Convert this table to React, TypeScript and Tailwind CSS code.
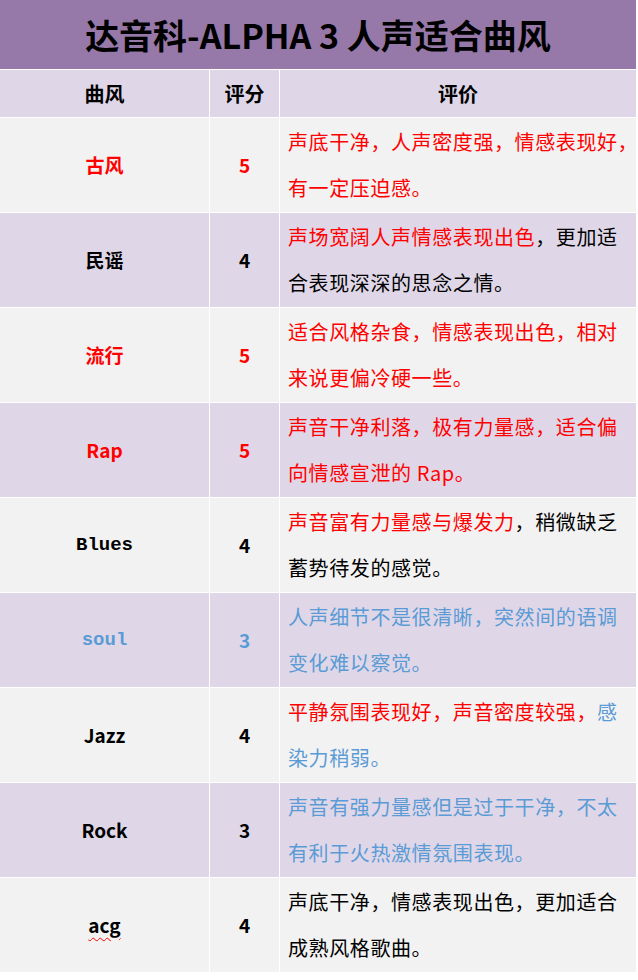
const RED = 'text-[#ff0000]'
const BLUE = 'text-[#5b9bd5]'
const BLACK = 'text-black'

type Seg = { t: string; c: string }
type Row = {
  name: string
  nameColor: string
  nameFont?: string
  score: string
  scoreColor: string
  lines: Seg[][]
  wavy?: boolean
}

const rows: Row[] = [
  {
    name: '古风', nameColor: RED, score: '5', scoreColor: RED,
    lines: [[{ t: '声底干净，人声密度强，情感表现好，', c: RED }], [{ t: '有一定压迫感。', c: RED }]],
  },
  {
    name: '民谣', nameColor: BLACK, score: '4', scoreColor: BLACK,
    lines: [
      [{ t: '声场宽阔人声情感表现出色', c: RED }, { t: '，更加适', c: BLACK }],
      [{ t: '合表现深深的思念之情。', c: BLACK }],
    ],
  },
  {
    name: '流行', nameColor: RED, score: '5', scoreColor: RED,
    lines: [[{ t: '适合风格杂食，情感表现出色，相对', c: RED }], [{ t: '来说更偏冷硬一些。', c: RED }]],
  },
  {
    name: 'Rap', nameColor: RED, score: '5', scoreColor: RED,
    lines: [[{ t: '声音干净利落，极有力量感，适合偏', c: RED }], [{ t: '向情感宣泄的 Rap。', c: RED }]],
  },
  {
    name: 'Blues', nameColor: BLACK, nameFont: 'mono', score: '4', scoreColor: BLACK,
    lines: [
      [{ t: '声音富有力量感与爆发力', c: RED }, { t: '，稍微缺乏', c: BLACK }],
      [{ t: '蓄势待发的感觉。', c: BLACK }],
    ],
  },
  {
    name: 'soul', nameColor: BLUE, nameFont: 'mono', score: '3', scoreColor: BLUE,
    lines: [[{ t: '人声细节不是很清晰，突然间的语调', c: BLUE }], [{ t: '变化难以察觉。', c: BLUE }]],
  },
  {
    name: 'Jazz', nameColor: BLACK, score: '4', scoreColor: BLACK,
    lines: [
      [{ t: '平静氛围表现好，声音密度较强，', c: RED }, { t: '感', c: BLUE }],
      [{ t: '染力稍弱。', c: BLUE }],
    ],
  },
  {
    name: 'Rock', nameColor: BLACK, score: '3', scoreColor: BLACK,
    lines: [[{ t: '声音有强力量感但是过于干净，不太', c: BLUE }], [{ t: '有利于火热激情氛围表现。', c: BLUE }]],
  },
  {
    name: 'acg', nameColor: BLACK, score: '4', scoreColor: BLACK, wavy: true,
    lines: [[{ t: '声底干净，情感表现出色，更加适合', c: BLACK }], [{ t: '成熟风格歌曲。', c: BLACK }]],
  },
]

const cjk = "font-['Noto_Sans_CJK_SC',sans-serif]"

export default function App() {
  return (
    <div className={`w-[638px] h-[980px] bg-white ${cjk}`}>
      <div className="w-[636px] flex flex-col gap-px">
        {/* Title */}
        <div className="h-[69px] bg-[#9679a9] flex items-center justify-center">
          <h1 className="text-[34px] font-bold text-black">达音科-ALPHA 3 人声适合曲风</h1>
        </div>

        <div className="grid grid-cols-[209px_69px_356px] gap-px">
          {/* Header */}
          <div className="h-[47px] bg-[#dfd7e8] flex items-center justify-center text-[20px] font-bold">曲风</div>
          <div className="h-[47px] bg-[#dfd7e8] flex items-center justify-center text-[20px] font-bold">评分</div>
          <div className="h-[47px] bg-[#dfd7e8] flex items-center justify-center text-[20px] font-bold">评价</div>

          {rows.map((r, i) => {
            const bg = i % 2 === 0 ? 'bg-[#f2f2f2]' : 'bg-[#dfd7e8]'
            const nameFont = r.nameFont === 'mono' ? "font-['Liberation_Mono',monospace]" : ''
            return [
              <div key={`n${i}`} className={`h-[94px] ${bg} flex items-center justify-center`}>
                <span
                  className={`text-[19px] font-bold ${r.nameColor} ${nameFont} ${
                    r.wavy ? 'underline decoration-wavy decoration-[#ff0000] decoration-1 underline-offset-4' : ''
                  }`}
                >
                  {r.name}
                </span>
              </div>,
              <div key={`s${i}`} className={`h-[94px] ${bg} flex items-center justify-center`}>
                <span className={`text-[19px] font-bold ${r.scoreColor}`}>{r.score}</span>
              </div>,
              <div key={`d${i}`} className={`h-[94px] ${bg} flex flex-col justify-center pl-2`}>
                {r.lines.map((line, j) => (
                  <div key={j} className="text-[20px] tracking-[0.6px] leading-[46px] whitespace-nowrap">
                    {line.map((s, k) => (
                      <span key={k} className={s.c}>{s.t}</span>
                    ))}
                  </div>
                ))}
              </div>,
            ]
          })}
        </div>
      </div>
    </div>
  )
}
